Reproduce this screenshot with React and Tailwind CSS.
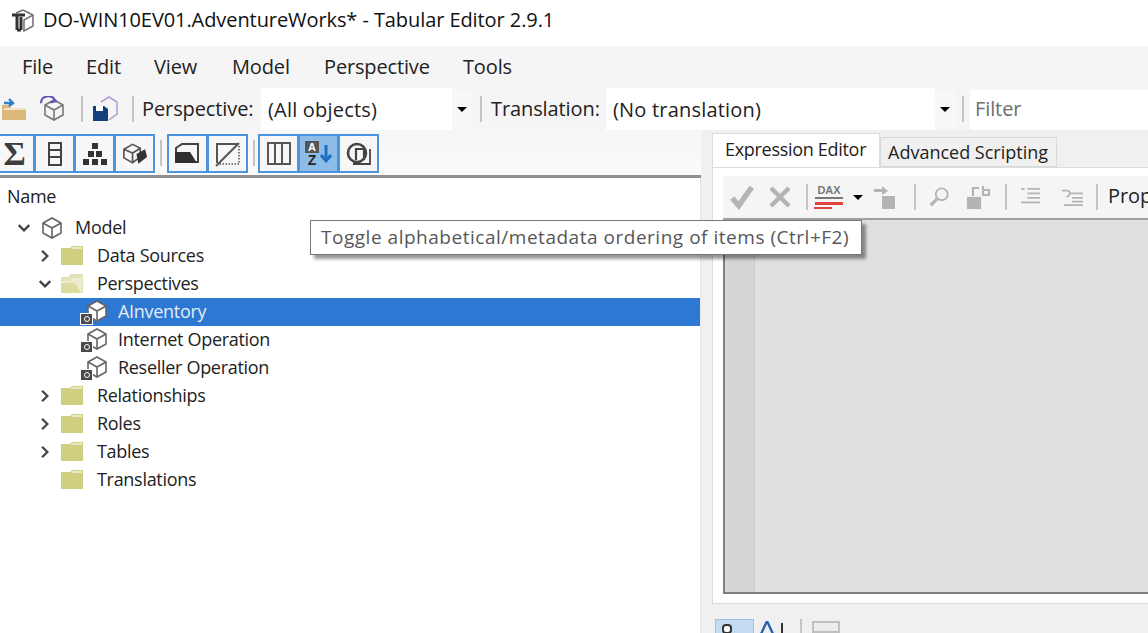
import React from 'react';

const font = { fontFamily: '"Open Sans", "Noto Sans", sans-serif' };

function Cube({ className = 'w-6 h-6', stroke = '#666' }) {
  return (
    <svg viewBox="0 0 24 24" className={className} fill="none" stroke={stroke} strokeWidth="1.6">
      <path d="M12 2 L21 7 V17 L12 22 L3 17 V7 Z" />
      <path d="M3 7 L12 12 L21 7 M12 12 V22" />
    </svg>
  );
}

function PerspectiveIcon() {
  return (
    <div className="relative w-[30px] h-[28px] shrink-0">
      <div className="absolute left-[6px] top-[1px]">
        <svg viewBox="0 0 24 24" className="w-[24px] h-[24px]" fill="none" stroke="#666" strokeWidth="1.6">
          <path d="M12 2 L21 7 V17 L12 22 L3 17 V7 Z" fill="#fff" />
          <path d="M3 7 L12 12 L21 7 M12 12 V22" />
        </svg>
      </div>
      <div className="absolute left-[1px] top-[15px] w-[13px] h-[12px] bg-[#4a4a4a] border border-white flex items-center justify-center">
        <div className="w-[6px] h-[6px] rounded-full border border-white" />
      </div>
    </div>
  );
}

function Folder({ open }) {
  return (
    <svg viewBox="0 0 24 22" className="w-[24px] h-[22px] shrink-0">
      {open ? (
        <>
          <path d="M1 4 H9 L10 1 H23 V20 H1 Z" fill="#e2e2b8" />
          <path d="M1 8 H9 L12 5 H22 V20 H1 Z" fill="#f4f4dc" opacity="0.6" />
          <path d="M1 10 H15 L21 20 H1 Z" fill="#dcdc9e" />
        </>
      ) : (
        <>
          <path d="M1 3 L10 3 L12 1 H23 V20 H1 Z" fill="#cfcf80" />
          <path d="M12 2 H22 V4 H11 Z" fill="#e9e9c4" />
        </>
      )}
    </svg>
  );
}

function Chevron({ open }) {
  return (
    <svg viewBox="0 0 12 12" className="w-[14px] h-[14px] shrink-0" fill="none" stroke="#444" strokeWidth="2">
      {open ? <path d="M1.5 3.5 L6 8 L10.5 3.5" /> : <path d="M3.5 1.5 L8 6 L3.5 10.5" />}
    </svg>
  );
}

function Caret() {
  return <div className="w-0 h-0 border-x-[5px] border-x-transparent border-t-[5px] border-t-black" />;
}

function ToolSep() {
  return <div className="w-[2px] h-[26px] bg-[#c4c4c4] shrink-0" />;
}

function FilterBtn({ children, active }) {
  return (
    <div className={`w-[41px] h-[39px] -ml-[1px] first:ml-0 border-2 border-[#4a94e0] flex items-center justify-center shrink-0 ${active ? 'bg-[#8dbce8]' : 'bg-[#f7f7f7]'}`}>
      {children}
    </div>
  );
}

function FolderRow({ chevron, open, label }) {
  return (
    <div className="h-[28px] flex items-center text-[#222]">
      <div className="w-[38px] shrink-0" />
      <div className="w-[22px] shrink-0 flex items-center">
        {chevron && <Chevron open={chevron === 'open'} />}
      </div>
      <Folder open={open} />
      <span className="ml-[13px] pb-[2px] text-[18px] tracking-[-0.3px] whitespace-nowrap">{label}</span>
    </div>
  );
}

function PerspectiveRow({ label, selected }) {
  return (
    <div className={`h-[28px] flex items-center ${selected ? 'bg-[#2d78d2] text-[#e4ecf6]' : 'text-[#222]'}`}>
      <div className="w-[79px] shrink-0" />
      <PerspectiveIcon />
      <span className="ml-[9px] pb-[2px] text-[18px] tracking-[-0.3px] whitespace-nowrap">{label}</span>
    </div>
  );
}

export default function App() {
  return (
    <div className="relative w-[1148px] h-[633px] overflow-hidden bg-[#f0f0f0] text-black" style={font}>
      {/* Title bar */}
      <div className="h-[46px] bg-white flex items-center pl-[10px] pb-[6px]">
        <svg viewBox="0 0 26 26" className="w-[26px] h-[26px] shrink-0" fill="none">
          <path d="M13 3 L23 8 V19 L14 24 V13 L23 8 M13 3 L6 6" stroke="#777" strokeWidth="1.6" />
          <path d="M2 8 H15 M7 8 V23 M7 23 H11 M11 10 V23" stroke="#333" strokeWidth="3" />
        </svg>
        <span className="ml-[7px] text-[20px] tracking-[-0.08px] whitespace-nowrap text-[#111]">
          DO-WIN10EV01.AdventureWorks* - Tabular Editor 2.9.1
        </span>
      </div>

      {/* Menu bar */}
      <div className="h-[42px] bg-[#f5f5f5] flex items-center pl-[22px] pb-[1px] text-[20px] tracking-[-0.15px] text-[#222]">
        <span className="w-[64px]">File</span>
        <span className="w-[68px]">Edit</span>
        <span className="w-[78px]">View</span>
        <span className="w-[92px]">Model</span>
        <span className="w-[139px]">Perspective</span>
        <span>Tools</span>
      </div>

      {/* Main toolbar */}
      <div className="h-[42px] bg-[#f5f5f5] flex items-center text-[20px] tracking-[-0.1px] text-[#222]">
        <svg viewBox="0 0 26 26" className="w-[26px] h-[26px] ml-[1px] shrink-0">
          <path d="M1 9 H8 L10 12 H25 V24 H1 Z" fill="#dcb77a" />
          <path d="M3 12 H25 V14 H3 Z" fill="#f3e3c4" />
          <path d="M3 7 H11 M8 3 L12 7 L8 10" stroke="#2f7fc9" strokeWidth="2.4" fill="none" />
        </svg>
        <div className="relative ml-[13px] w-[26px] h-[26px] shrink-0">
          <Cube className="w-[24px] h-[24px] absolute top-[2px] left-[2px]" stroke="#777" />
          <svg viewBox="0 0 26 12" className="absolute left-0 top-0 w-[18px] h-[9px]" fill="none" stroke="#5d55b5" strokeWidth="3">
            <path d="M2 10 A9 7 0 0 1 22 6 M18 1 L23 7 L15 9" />
          </svg>
        </div>
        <div className="ml-[15px]"><ToolSep /></div>
        <div className="relative ml-[8px] w-[28px] h-[28px] shrink-0">
          <svg viewBox="0 0 28 28" className="w-[28px] h-[28px]" fill="none">
            <path d="M10 7 L18 2 L26 7 V19 L18 25" stroke="#b59ad6" strokeWidth="1.5" />
            <path d="M2 11 H13 L17 14 V26 H2 Z" fill="#123f7e" />
            <path d="M5 11 H12 V16 H5 Z" fill="#fff" />
          </svg>
        </div>
        <div className="ml-[13px]"><ToolSep /></div>
        <span className="ml-[8px] w-[119px] whitespace-nowrap">Perspective:</span>
        <div className="h-[42px] w-[191px] bg-white flex items-center pl-[7px] pt-[2px] tracking-[0.2px] shrink-0">
          <span className="whitespace-nowrap">(All objects)</span>
        </div>
        <div className="h-[36px] w-[20px] bg-[#f8f8f8] flex items-center justify-center shrink-0"><Caret /></div>
        <div className="ml-[8px]"><ToolSep /></div>
        <span className="ml-[9px] w-[115px] whitespace-nowrap">Translation:</span>
        <div className="h-[42px] w-[329px] bg-white flex items-center pl-[7px] pt-[2px] tracking-[0.2px] shrink-0">
          <span className="whitespace-nowrap">(No translation)</span>
        </div>
        <div className="h-[36px] w-[20px] bg-[#f8f8f8] flex items-center justify-center shrink-0"><Caret /></div>
        <div className="ml-[7px]"><ToolSep /></div>
        <div className="ml-[6px] h-[40px] mt-[2px] flex-1 bg-white flex items-center pl-[5px] pb-[2px] text-[#6d6d6d]">Filter</div>
      </div>

      {/* Body */}
      <div className="flex h-[503px]">
        {/* Left pane */}
        <div className="w-[701px] shrink-0 flex flex-col">
          <div className="h-[48px] pt-[4px] bg-gradient-to-b from-[#f6f6f6] to-[#fbfbfb] border-b-[3px] border-[#8f8f8f] flex items-start">
            <div className="flex -ml-[6px]">
              <FilterBtn>
                <span className="text-[34px] leading-none font-bold text-[#3d3d3d]" style={{ fontFamily: '"Liberation Serif", serif' }}>Σ</span>
              </FilterBtn>
              <FilterBtn>
                <div className="w-[14px] h-[24px] border-2 border-[#444] flex flex-col justify-evenly">
                  <div className="h-[2px] bg-[#444]" />
                  <div className="h-[2px] bg-[#444]" />
                </div>
              </FilterBtn>
              <FilterBtn>
                <svg viewBox="0 0 26 24" className="w-[26px] h-[24px]" fill="#333">
                  <rect x="10" y="1" width="6" height="6" />
                  <rect x="6" y="9" width="6" height="6" />
                  <rect x="14" y="9" width="6" height="6" />
                  <rect x="1" y="17" width="6" height="6" />
                  <rect x="10" y="17" width="6" height="6" />
                  <rect x="19" y="17" width="6" height="6" />
                </svg>
              </FilterBtn>
              <FilterBtn>
                <svg viewBox="0 0 28 24" className="w-[27px] h-[24px]">
                  <path d="M3 7 L12 2 L20 6 V15 L12 21 L3 16 Z M3 7 L12 11 L20 6 M12 11 V21" fill="none" stroke="#555" strokeWidth="1.7" />
                  <path d="M16 12 L25 7 L27 15 L18 22 Z" fill="#333" />
                </svg>
              </FilterBtn>
            </div>
            <div className="ml-[5px] mr-[5px] mt-[6px]"><ToolSep /></div>
            <div className="flex">
              <FilterBtn>
                <svg viewBox="0 0 28 24" className="w-[28px] h-[24px]">
                  <path d="M2 6 L8 2 H24 V20 H2 Z" fill="none" stroke="#444" strokeWidth="2" />
                  <path d="M1 10 H16 L23 21 H1 Z" fill="#2f2f2f" />
                </svg>
              </FilterBtn>
              <FilterBtn>
                <svg viewBox="0 0 28 26" className="w-[28px] h-[26px]" fill="none">
                  <path d="M24 3 H3 V22" stroke="#555" strokeWidth="2" />
                  <path d="M2 25 L25 2" stroke="#555" strokeWidth="2" />
                  <path d="M25 5 V23 H5" stroke="#555" strokeWidth="1.5" strokeDasharray="1.5 1.5" />
                </svg>
              </FilterBtn>
            </div>
            <div className="ml-[5px] mr-[3px] mt-[6px]"><ToolSep /></div>
            <div className="flex">
              <FilterBtn>
                <div className="w-[24px] h-[23px] border-2 border-[#555] flex justify-evenly">
                  <div className="w-[2px] bg-[#555]" />
                  <div className="w-[2px] bg-[#555]" />
                </div>
              </FilterBtn>
              <FilterBtn active>
                <div className="flex items-center gap-[1px]">
                  <div className="flex flex-col items-center gap-[1px] text-[11px] font-bold" style={{ fontFamily: '"Liberation Sans", sans-serif' }}>
                    <span className="bg-[#555] text-white w-[14px] text-center h-[12px] leading-[12px]">A</span>
                    <span className="h-[13px] leading-[13px] text-[#222] text-[14px]">Z</span>
                  </div>
                  <svg viewBox="0 0 12 20" className="w-[12px] h-[20px]" fill="none" stroke="#1e6fc2" strokeWidth="3">
                    <path d="M6 1 V17 M1 11 L6 17 L11 11" />
                  </svg>
                </div>
              </FilterBtn>
              <FilterBtn>
                <svg viewBox="0 0 28 26" className="w-[28px] h-[26px]" fill="none" stroke="#444">
                  <path d="M8 23 H25 V8" strokeWidth="1.8" />
                  <circle cx="12" cy="12" r="9" strokeWidth="2.6" />
                  <path d="M11 19 V8 H19 V19" strokeWidth="2.2" />
                </svg>
              </FilterBtn>
            </div>
          </div>

          {/* Tree */}
          <div className="flex-1 bg-white border-r border-[#e4e4e4]">
            <div className="h-[36px] flex items-center pl-[7px] text-[18px] tracking-[-0.3px] text-[#222]">Name</div>
            <div className="h-[28px] flex items-center text-[#222]">
              <div className="w-[17px] shrink-0" />
              <div className="w-[23px] shrink-0 flex items-center"><Chevron open /></div>
              <Cube />
              <span className="ml-[11px] pb-[2px] text-[18px] tracking-[-0.3px] whitespace-nowrap">Model</span>
            </div>
            <FolderRow chevron="closed" label="Data Sources" />
            <FolderRow chevron="open" open label="Perspectives" />
            <PerspectiveRow selected label="AInventory" />
            <PerspectiveRow label="Internet Operation" />
            <PerspectiveRow label="Reseller Operation" />
            <FolderRow chevron="closed" label="Relationships" />
            <FolderRow chevron="closed" label="Roles" />
            <FolderRow chevron="closed" label="Tables" />
            <FolderRow label="Translations" />
          </div>
        </div>

        {/* Right pane */}
        <div className="flex-1 pl-[11px] flex flex-col min-w-0">
          <div className="h-[37px] pt-[3px] flex items-end">
            <div className="h-[34px] w-[168px] bg-white border border-[#dcdcdc] border-b-0 flex items-center pl-[12px] pb-[2px] text-[18px] tracking-[-0.3px] text-[#222] whitespace-nowrap">
              Expression Editor
            </div>
            <div className="h-[30px] w-[177px] bg-[#f0f0f0] border border-[#d9d9d9] flex items-center pl-[7px] text-[18px] tracking-[0px] text-[#222] whitespace-nowrap">
              Advanced Scripting
            </div>
          </div>
          <div className="h-[437px] bg-white border border-[#dcdcdc] border-r-0 pt-[8px] pb-[9px] pl-[10px] flex flex-col">
            <div className="h-[44px] bg-[#f5f5f5] border-b-2 border-[#a0a0a0] flex items-center shrink-0">
              <svg viewBox="0 0 24 24" className="ml-[6px] w-[26px] h-[26px] shrink-0" fill="none" stroke="#b4b4b4" strokeWidth="5">
                <path d="M3 13 L9 20 L21 3" />
              </svg>
              <svg viewBox="0 0 24 24" className="ml-[13px] w-[24px] h-[24px] shrink-0" fill="none" stroke="#b4b4b4" strokeWidth="4.5">
                <path d="M3 3 L21 21 M21 3 L3 21" />
              </svg>
              <div className="ml-[14px]"><ToolSep /></div>
              <div className="ml-[6px] w-[30px] shrink-0 flex flex-col items-center leading-none">
                <span className="text-[11px] font-bold leading-[11px] text-[#777]" style={{ fontFamily: '"Liberation Sans", sans-serif' }}>DAX</span>
                <div className="w-[28px] h-[2px] mt-[1px] bg-[#777]" />
                <div className="w-[28px] h-[3px] mt-[3px] bg-[#e0443e]" />
                <div className="w-[18px] h-[2px] mt-[2px] self-start bg-[#e0443e]" />
              </div>
              <div className="ml-[9px]"><Caret /></div>
              <svg viewBox="0 0 24 26" className="ml-[10px] w-[24px] h-[26px] shrink-0" fill="#b4b4b4">
                <rect x="9" y="12" width="13" height="13" />
                <path d="M1 5 H9 V2 L15 7 L9 11 V8 H1 Z" />
              </svg>
              <div className="ml-[17px]"><ToolSep /></div>
              <svg viewBox="0 0 24 24" className="ml-[12px] w-[22px] h-[22px] shrink-0" fill="none" stroke="#b4b4b4">
                <circle cx="15" cy="9" r="6.5" strokeWidth="2" />
                <path d="M10 14 L3 21" strokeWidth="3.5" />
              </svg>
              <svg viewBox="0 0 26 26" className="ml-[16px] w-[26px] h-[26px] shrink-0" fill="none" stroke="#b4b4b4" strokeWidth="2.2">
                <path d="M17 2 V11 H23 V6 H17" />
                <path d="M13 4 H7 V12" />
                <rect x="2" y="14" width="12" height="10" fill="#b4b4b4" />
              </svg>
              <div className="ml-[13px]"><ToolSep /></div>
              <svg viewBox="0 0 24 22" className="ml-[13px] w-[22px] h-[20px] shrink-0" stroke="#b4b4b4" strokeWidth="2">
                <path d="M1 2 H5 M8 2 H22 M8 7 H22 M8 12 H22 M1 17 H22" />
              </svg>
              <svg viewBox="0 0 26 22" className="ml-[18px] w-[24px] h-[20px] shrink-0" fill="none" stroke="#b4b4b4" strokeWidth="2">
                <path d="M2 4 H7 Q12 4 10 9 L7 11 M11 7 H25 M13 12 H25 M13 16 H25 M4 20 H25" />
              </svg>
              <div className="ml-[12px]"><ToolSep /></div>
              <span className="ml-[10px] pb-[2px] text-[20px] tracking-[-0.1px] text-[#222]">Prop</span>
            </div>
            <div className="flex-1 flex border-l-2 border-b-2 border-[#808080]">
              <div className="w-[30px] bg-[#d6d6d6] border-r border-[#c8c8c8] shrink-0" />
              <div className="flex-1 bg-[#e0e0e0]" />
            </div>
          </div>
          <div className="flex-1 flex items-end pl-[3px]">
            <div className="h-[14px] w-[39px] bg-[#c4dcf2] border-t border-x border-[#9cc4ea] pl-[6px] pt-[4px] overflow-hidden">
              <div className="w-[10px] h-[10px] border-2 border-[#333] rounded-sm bg-white" />
            </div>
            <svg viewBox="0 0 14 12" className="ml-[6px] w-[14px] h-[12px] shrink-0" fill="none" stroke="#2a62b0" strokeWidth="2.4">
              <path d="M1 13 L7 0 L13 13" />
            </svg>
            <div className="ml-[7px] w-[2px] h-[10px] bg-[#333]" />
            <div className="ml-[17px] w-[2px] h-[14px] bg-[#c4c4c4]" />
            <div className="ml-[10px] w-[28px] h-[12px] bg-[#c0c0c0] p-[2px]"><div className="w-full h-full bg-[#ececec]" /></div>
          </div>
        </div>
      </div>

      {/* Tooltip */}
      <div className="absolute left-[310px] top-[220px] w-[552px] h-[35px] bg-white border border-[#767676] shadow-[4px_4px_3px_rgba(0,0,0,0.4)] flex items-center pl-[10px] text-[19px] tracking-[0.52px] text-[#575757] whitespace-nowrap">
        Toggle alphabetical/metadata ordering of items (Ctrl+F2)
      </div>
    </div>
  );
}
